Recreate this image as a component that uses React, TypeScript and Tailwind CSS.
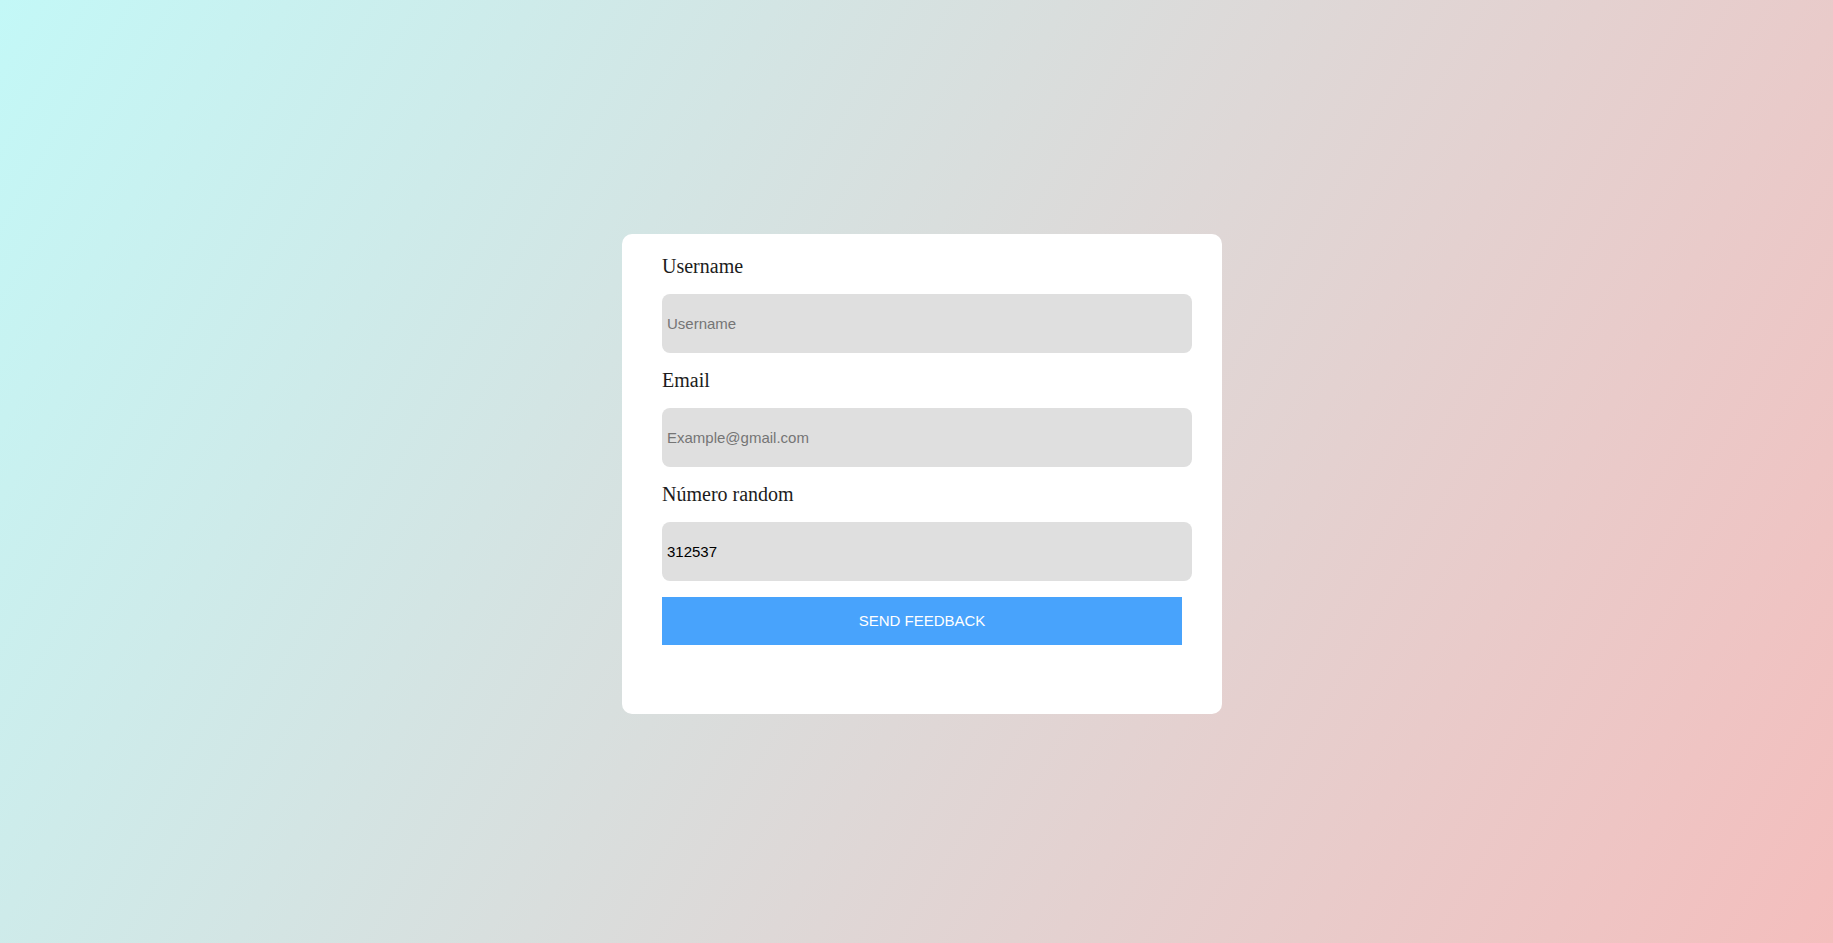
export default function App() {
  const fields = [
    { label: "Username", placeholder: "Username", value: "" },
    { label: "Email", placeholder: "Example@gmail.com", value: "" },
    { label: "Número random", placeholder: "", value: "312537" },
  ];

  return (
    <div className="flex min-h-screen items-center justify-center bg-[linear-gradient(120deg,#c3f8f7,#f4bebd)] pl-[11px] pt-1">
      <form className="flex w-[600px] flex-col gap-4 rounded-[10px] bg-white pb-[69px] pl-10 pt-[21px]" onSubmit={(e) => e.preventDefault()}>
        {fields.map((f) => (
          <div key={f.label} className="flex flex-col gap-4">
            <label className="text-[20px] leading-[23px] text-[#1c1c1c]" style={{ fontFamily: '"Liberation Serif", serif' }}>
              {f.label}
            </label>
            <input
              type="text"
              placeholder={f.placeholder}
              defaultValue={f.value}
              className="h-[59px] w-[530px] rounded-[8px] bg-[#dfdfdf] pl-[5px] text-[15px] text-black outline-none placeholder:text-[#757575]"
              style={{ fontFamily: '"Liberation Sans", Arial, sans-serif' }}
            />
          </div>
        ))}
        <button
          type="submit"
          className="h-[48px] w-[520px] bg-[#48a3fc] pt-[2px] text-[15px] uppercase text-white"
          style={{ fontFamily: '"Liberation Sans", Arial, sans-serif' }}
        >
          Send feedback
        </button>
      </form>
    </div>
  );
}
